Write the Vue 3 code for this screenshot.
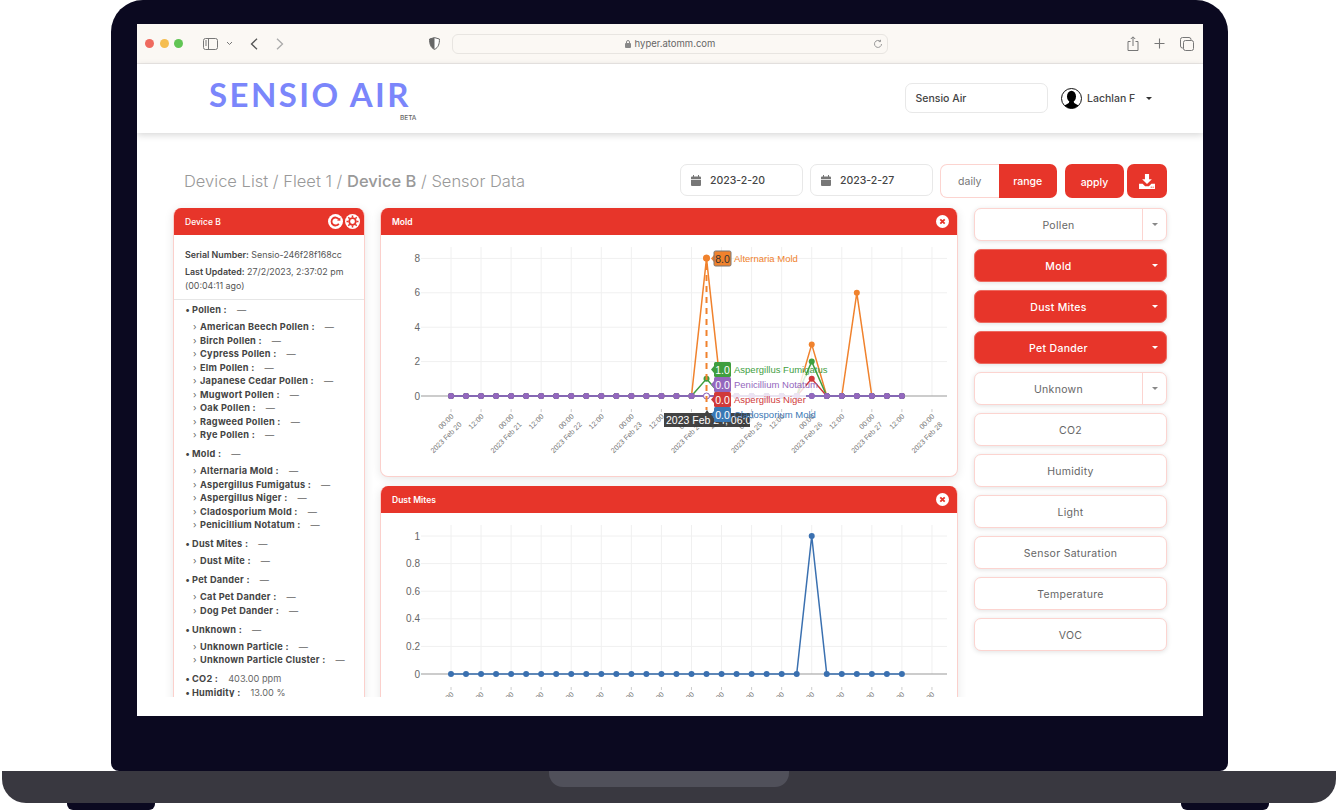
<template>
  <div class="page">
    <div class="laptop">
      <div class="screen">
        <!-- safari toolbar -->
        <div class="browser-bar">
          <div class="bar-left">
            <span class="dot red"></span>
            <span class="dot yellow"></span>
            <span class="dot green"></span>
            <svg class="ic sidebar-ic" width="15" height="12" viewBox="0 0 15 12" fill="none" stroke="#777" stroke-width="1">
              <rect x="0.5" y="0.5" width="14" height="11" rx="2" />
              <path d="M5.5 .5v11M2 3h2M2 5h2M2 7h2" />
            </svg>
            <svg class="ic chev-ic" width="7" height="5" viewBox="0 0 7 5" fill="none" stroke="#777" stroke-width="1"><path d="M1 1l2.5 2.5L6 1" /></svg>
            <svg class="ic back-ic" width="8" height="12" viewBox="0 0 8 12" fill="none" stroke="#555" stroke-width="1.3"><path d="M7 .8L1.5 6 7 11.2" /></svg>
            <svg class="ic fwd-ic" width="8" height="12" viewBox="0 0 8 12" fill="none" stroke="#aaa" stroke-width="1.3"><path d="M1 .8L6.5 6 1 11.2" /></svg>
          </div>
          <svg class="ic shield-ic" width="11" height="13" viewBox="0 0 11 13">
            <path d="M5.5.6L10.4 2c.2 4.600-1 8.600-4.900 10.400C1.600 10.600.4 6.600.6 2z" fill="#fff" stroke="#666" />
            <path d="M5.500.6L.6 2c-.2 4.600 1 8.600 4.900 10.400z" fill="#666" />
          </svg>
          <div class="url-bar">
            <svg width="6" height="8" viewBox="0 0 6 8"><rect y="3" width="6" height="5" rx="1" fill="#888" /><path d="M1.500 3V2a1.500 1.500 0 013 0v1" fill="none" stroke="#888" /></svg>
            <span>hyper.atomm.com</span>
            <svg class="reload" width="10" height="10" viewBox="0 0 10 10" fill="none" stroke="#999"><path d="M8.500 5a3.500 3.500 0 11-1.200-2.700M7.500.8v1.800H5.700" /></svg>
          </div>
          <div class="bar-right">
            <svg width="12" height="15" viewBox="0 0 12 15" fill="none" stroke="#777"><path d="M3.500 5.500H1v9h10v-9H8.500M6 10V1M3.800 3L6 .8 8.200 3" /></svg>
            <svg width="11" height="11" viewBox="0 0 11 11" fill="none" stroke="#777" stroke-width="1.100"><path d="M5.500.5v10M.5 5.500h10" /></svg>
            <svg width="14" height="14" viewBox="0 0 14 14" fill="none" stroke="#777"><rect x="3.500" y="3.500" width="10" height="10" rx="2" /><path d="M3.500 11H2.500a2 2 0 01-2-2V2.500a2 2 0 012-2H9a2 2 0 012 2v1" /></svg>
          </div>
        </div>

        <!-- app header -->
        <header class="app-header">
          <div class="logo">
            <span class="logo-name">SENSIO AIR</span>
            <span class="logo-beta">BETA</span>
          </div>
          <div class="org-select">Sensio Air</div>
          <svg class="avatar" width="21" height="21" viewBox="0 0 21 21">
            <defs><clipPath id="av"><circle cx="10.500" cy="10.500" r="10" /></clipPath></defs>
            <circle cx="10.500" cy="10.500" r="10" fill="#fff" stroke="#111" />
            <g clip-path="url(#av)">
              <ellipse cx="10.500" cy="8.500" rx="4.500" ry="5.800" />
              <path d="M8.500 13h4l.7 2 4.300 2.500V21h-14v-3.500L7.800 15z" />
            </g>
          </svg>
          <span class="user-name">Lachlan F</span>
          <span class="caret dark"></span>
        </header>

        <main class="content">
          <div class="toolbar">
            <div class="breadcrumb">
              <span>Device List</span> / <span>Fleet 1</span> / <b>Device B</b> / <span>Sensor Data</span>
            </div>
            <div class="controls">
              <div v-for="d in dates" :key="d" class="date-input">
                <svg width="10" height="11" viewBox="0 0 10 11" fill="#777">
                  <path d="M2 0h1v1.500h4V0h1v1.500h1a1 1 0 011 1V4H0V2.500a1 1 0 011-1h1zM0 4.700h10V10a1 1 0 01-1 1H1a1 1 0 01-1-1z" />
                </svg>
                <span>{{ d }}</span>
              </div>
              <div class="toggle">
                <span class="toggle-off">daily</span>
                <span class="toggle-on">range</span>
              </div>
              <button class="btn-red apply">apply</button>
              <button class="btn-red download">
                <svg width="16" height="15" viewBox="0 0 17 16" fill="#fff">
                  <path d="M6.300 0h4.400v5.500h3L8.500 10.700 3.300 5.500h3zM0 10.500h3.800L6.500 13h4l2.700-2.500H17V16H0z" />
                  <circle cx="13" cy="14" r=".6" fill="#e7352a" />
                  <circle cx="15" cy="14" r=".6" fill="#e7352a" />
                </svg>
              </button>
            </div>
          </div>

          <div class="columns">
            <section class="panel device-panel">
              <div class="panel-head">
                <span>Device B</span>
                <div class="head-icons">
                  <svg width="15" height="15" viewBox="0 0 15 15">
                    <circle cx="7.500" cy="7.500" r="7.500" fill="#fff" />
                    <path d="M10.800 5.200a4 4 0 100 4.600" fill="none" stroke="#e7352a" stroke-width="1.800" />
                    <path d="M9 6.600l3.400.2-.1-3.400z" fill="#e7352a" />
                  </svg>
                  <svg width="15" height="15" viewBox="0 0 15 15">
                    <circle cx="7.500" cy="7.500" r="7.500" fill="#fff" />
                    <circle cx="7.500" cy="7.500" r="3.300" fill="none" stroke="#e7352a" stroke-width="1.800" />
                    <path d="M7.500 1.500v2M7.500 11.500v2M1.500 7.500h2M11.500 7.500h2M3.300 3.300l1.400 1.400M10.300 10.300l1.400 1.400M11.700 3.300l-1.400 1.400M4.700 10.300l-1.400 1.400" stroke="#e7352a" stroke-width="1.500" />
                  </svg>
                </div>
              </div>
              <div class="device-info">
                <div class="info-row"><b>Serial Number:</b> Sensio-246f28f168cc</div>
                <div class="info-row"><b>Last Updated:</b> 27/2/2023, 2:37:02 pm</div>
                <div class="info-ago">(00:04:11 ago)</div>
              </div>
              <div class="reading-list">
                <div v-for="g in readings" :key="g.name" class="group">
                  <div class="group-title">
                    <span class="bullet">•</span><b>{{ g.name }} :</b><span class="val">{{ g.value }}</span>
                  </div>
                  <div v-if="g.items" class="sublist">
                    <div v-for="item in g.items" :key="item" class="sub-row">
                      <span class="arrow">›</span><b>{{ item }} :</b><span class="val">—</span>
                    </div>
                  </div>
                </div>
              </div>
            </section>

            <div class="charts">
              <section v-for="c in charts" :key="c.title" class="panel chart-panel">
                <div class="panel-head">
                  <span>{{ c.title }}</span>
                  <svg width="13" height="13" viewBox="0 0 13 13">
                    <circle cx="6.500" cy="6.500" r="6.500" fill="#fff" />
                    <path d="M4.300 4.300l4.400 4.400M8.700 4.300L4.300 8.700" stroke="#e7352a" stroke-width="1.800" />
                  </svg>
                </div>
                <svg class="chart" width="576" height="241" :viewBox="`381 ${c.top} 576 241`">
                  <line v-for="t in ticks" :key="'v' + t.i" :x1="t.x" :x2="t.x" :y1="c.gridTop" :y2="c.zero" stroke="#f0f0f0" />
                  <g v-for="y in c.yAxis" :key="'y' + y.label">
                    <line x1="421" x2="947" :y1="y.y" :y2="y.y" :stroke="y.value === 0 ? '#999' : '#f0f0f0'" />
                    <text class="y-label" x="420" :y="y.y + 3.500" text-anchor="end">{{ y.label }}</text>
                  </g>
                  <g v-for="t in ticks" :key="'t' + t.i">
                    <line :x1="t.x" :x2="t.x" :y1="c.zero + 13" :y2="c.zero + 16" stroke="#ccc" />
                    <text class="x-label" text-anchor="end" :x="t.x + 3" :y="c.zero + 21" :transform="`rotate(-45 ${t.x + 3} ${c.zero + 21})`">{{ t.time }}</text>
                    <text v-if="t.date" class="x-label" text-anchor="end" :x="t.x + 11" :y="c.zero + 29" :transform="`rotate(-45 ${t.x + 11} ${c.zero + 29})`">{{ t.date }}</text>
                  </g>
                  <g v-for="s in c.series" :key="s.name">
                    <polyline :points="s.points" fill="none" :stroke="s.color" stroke-width="1.500" />
                    <circle v-for="p in s.dots" :key="p.x" :cx="p.x" :cy="p.y" r="3" :fill="s.color" />
                  </g>
                  <template v-if="c.tooltip">
                    <rect x="718" y="372" width="88" height="32" fill="#fff" opacity="0.82" />
                    <circle :cx="hoverX" :cy="c.zero" r="3" fill="#fff" stroke="#9467bd" />
                    <line :x1="hoverX" :x2="hoverX" y1="264" y2="410" stroke="#f0822d" stroke-width="2" stroke-dasharray="6 5" />
                    <circle :cx="hoverX" cy="258" r="3.500" fill="#f0822d" />
                    <path d="M702 413h3l2-3 2 3h41v14h-86v-14z" fill="#333" opacity="0.92" />
                    <text class="tip-date" x="666" y="424">2023 Feb 24, 06:00</text>
                    <g v-for="l in hoverLabels" :key="l.name">
                      <path :d="`M714 ${l.y + 4}l-3 3.500 3 3.500z`" :fill="l.color" />
                      <rect x="714" :y="l.y" width="17" height="15" rx="1.500" :fill="l.color" :stroke="l.border" />
                      <text class="tip-value" x="722.500" :y="l.y + 11.500" text-anchor="middle" :fill="l.ink">{{ l.value }}</text>
                      <text class="tip-name" x="734" :y="l.y + 11" :fill="l.color">{{ l.name }}</text>
                    </g>
                  </template>
                </svg>
              </section>
            </div>

            <div class="filters">
              <div v-for="f in filters" :key="f.name" class="filter" :class="{ active: f.active, split: f.split }">
                <span class="filter-name">{{ f.name }}</span>
                <span v-if="f.split" class="filter-drop"><span class="caret"></span></span>
              </div>
            </div>
          </div>
        </main>
        <div class="screen-foot"></div>
      </div>
    </div>
    <div class="base">
      <div class="notch"></div>
    </div>
    <div class="feet">
      <span class="foot"></span>
      <span class="foot"></span>
    </div>
  </div>
</template>

<script setup>
const dates = ["2023-2-20", "2023-2-27"];

const readings = [
  {
    name: "Pollen",
    value: "—",
    items: [
      "American Beech Pollen",
      "Birch Pollen",
      "Cypress Pollen",
      "Elm Pollen",
      "Japanese Cedar Pollen",
      "Mugwort Pollen",
      "Oak Pollen",
      "Ragweed Pollen",
      "Rye Pollen",
    ],
  },
  {
    name: "Mold",
    value: "—",
    items: [
      "Alternaria Mold",
      "Aspergillus Fumigatus",
      "Aspergillus Niger",
      "Cladosporium Mold",
      "Penicillium Notatum",
    ],
  },
  { name: "Dust Mites", value: "—", items: ["Dust Mite"] },
  { name: "Pet Dander", value: "—", items: ["Cat Pet Dander", "Dog Pet Dander"] },
  { name: "Unknown", value: "—", items: ["Unknown Particle", "Unknown Particle Cluster"] },
  { name: "CO2", value: "403.00 ppm" },
  { name: "Humidity", value: "13.00 %" },
];

const filters = [
  { name: "Pollen", split: true },
  { name: "Mold", split: true, active: true },
  { name: "Dust Mites", split: true, active: true },
  { name: "Pet Dander", split: true, active: true },
  { name: "Unknown", split: true },
  { name: "CO2" },
  { name: "Humidity" },
  { name: "Light" },
  { name: "Sensor Saturation" },
  { name: "Temperature" },
  { name: "VOC" },
];

const xOf = (i) => 451 + i * 15.03;
const hoverX = xOf(17);

const ticks = [];
for (let i = 0; i <= 16; i++) {
  const day = 20 + i / 2;
  ticks.push({
    i,
    x: xOf(i * 2),
    time: i % 2 ? "12:00" : "00:00",
    date: i % 2 ? "" : `2023 Feb ${day}`,
  });
}

// one value every 6h, zero unless listed
function makeSeries(name, color, peaks, yOf) {
  const dots = [];
  for (let i = 0; i <= 30; i++) {
    dots.push({ x: xOf(i), y: yOf(peaks[i] || 0) });
  }
  return { name, color, dots, points: dots.map((d) => `${d.x},${d.y}`).join(" ") };
}

const moldY = (v) => 396 - v * 17.2;
const dustY = (v) => 674 - v * 138;

const charts = [
  {
    title: "Mold",
    top: 235,
    gridTop: 247,
    zero: 396,
    tooltip: true,
    yAxis: [8, 6, 4, 2, 0].map((v) => ({ value: v, label: String(v), y: moldY(v) })),
    series: [
      makeSeries("Alternaria Mold", "#f0822d", { 17: 8, 24: 3, 27: 6 }, moldY),
      makeSeries("Aspergillus Fumigatus", "#3f9e3f", { 17: 1, 24: 2 }, moldY),
      makeSeries("Aspergillus Niger", "#d0393a", { 24: 1 }, moldY),
      makeSeries("Cladosporium Mold", "#3a78b5", {}, moldY),
      makeSeries("Penicillium Notatum", "#9467bd", {}, moldY),
    ],
  },
  {
    title: "Dust Mites",
    top: 513,
    gridTop: 525,
    zero: 674,
    yAxis: [1, 0.8, 0.6, 0.4, 0.2, 0].map((v) => ({ value: v, label: String(v), y: dustY(v) })),
    series: [makeSeries("Dust Mite", "#3a70b0", { 24: 1 }, dustY)],
  },
];

const hoverLabels = [
  { name: "Alternaria Mold", value: "8.0", y: 251, color: "#f0822d", ink: "#333", border: "#777" },
  { name: "Aspergillus Fumigatus", value: "1.0", y: 362, color: "#3f9e3f", ink: "#fff", border: "none" },
  { name: "Penicillium Notatum", value: "0.0", y: 377, color: "#9467bd", ink: "#fff", border: "none" },
  { name: "Aspergillus Niger", value: "0.0", y: 392, color: "#d0393a", ink: "#fff", border: "none" },
  { name: "Cladosporium Mold", value: "0.0", y: 407, color: "#3a78b5", ink: "#fff", border: "none" },
];
</script>

<style>
html,
body {
  margin: 0;
  background: #fff;
}
</style>

<style scoped>
.page {
  width: 1336px;
  height: 810px;
  overflow: hidden;
  background: #fff;
  font-family: Inter, "Liberation Sans", sans-serif;
  color: #444;
}

.laptop {
  box-sizing: border-box;
  width: 1117px;
  height: 771px;
  margin-left: 111px;
  padding: 24px 25px 55px 26px;
  background: #0b0920;
  border-radius: 32px 32px 8px 8px;
}

.screen {
  display: flex;
  flex-direction: column;
  height: 692px;
  background: #fff;
  overflow: hidden;
}

/* browser bar */
.browser-bar {
  display: flex;
  align-items: center;
  flex: none;
  height: 40px;
  background: #fbf8f4;
  border-bottom: 1px solid #ece9e6;
  box-sizing: border-box;
}

.bar-left {
  display: flex;
  align-items: center;
  width: 292px;
  padding-left: 8px;
  box-sizing: border-box;
}

.dot {
  width: 9px;
  height: 9px;
  border-radius: 50%;
  margin-right: 5.5px;
}

.dot.red {
  background: #ef6a5f;
}

.dot.yellow {
  background: #f5bd4f;
}

.dot.green {
  background: #61c554;
}

.sidebar-ic {
  margin-left: 14px;
}

.chev-ic {
  margin-left: 8px;
}

.back-ic {
  margin-left: 17px;
}

.fwd-ic {
  margin-left: 18px;
}

.url-bar {
  position: relative;
  display: flex;
  align-items: center;
  justify-content: center;
  gap: 4px;
  width: 436px;
  height: 20px;
  margin-left: 12px;
  box-sizing: border-box;
  background: #fbf8f4;
  border: 1px solid #e8e5e1;
  border-radius: 6px;
  font-size: 9.500px;
  color: #666;
}

.reload {
  position: absolute;
  right: 4px;
  top: 4px;
}

.bar-right {
  display: flex;
  align-items: center;
  gap: 15px;
  margin-left: auto;
  padding-right: 9px;
}

/* app header */
.app-header {
  display: flex;
  align-items: center;
  flex: none;
  height: 69px;
  padding-left: 72px;
  background: #fff;
  box-shadow: 0 2px 7px rgba(0, 0, 0, 0.16);
  position: relative;
}

.logo {
  display: flex;
  flex-direction: column;
  width: 696px;
  padding-top: 2px;
}

.logo-name {
  font-family: Lato, sans-serif;
  font-weight: 700;
  font-size: 33px;
  line-height: 33px;
  letter-spacing: 2.400px;
  color: #7b86fb;
}

.logo-beta {
  margin: 3px 0 0 191px;
  font-size: 6.500px;
  font-weight: 500;
  line-height: 8px;
  color: #666;
}

.org-select {
  box-sizing: border-box;
  width: 143px;
  height: 30px;
  margin-top: -2px;
  padding-left: 9.500px;
  line-height: 29px;
  font-size: 10.500px;
  font-weight: 500;
  color: #444;
  border: 1px solid #e8e8e8;
  border-radius: 7px;
}

.avatar {
  margin-left: 13px;
}

.user-name {
  margin-left: 5px;
  font-size: 10.500px;
  font-weight: 500;
  color: #444;
}

.caret {
  display: inline-block;
  width: 0;
  height: 0;
  border-left: 3px solid transparent;
  border-right: 3px solid transparent;
  border-top: 3px solid #888;
}

.caret.dark {
  margin-left: 11px;
  border-top-color: #333;
}

/* page body */
.content {
  flex: none;
  box-sizing: border-box;
  height: 564px;
  padding: 31px 36px 0;
  overflow: hidden;
}

.screen-foot {
  flex: 1;
  background: #fff;
  position: relative;
}

.toolbar {
  display: flex;
  align-items: flex-start;
  height: 34px;
  margin-bottom: 10px;
}

.breadcrumb {
  margin-left: 11px;
  font-size: 16.500px;
  line-height: 34px;
  font-weight: 300;
  color: #999;
}

.breadcrumb b {
  font-weight: 500;
}

.controls {
  display: flex;
  margin-left: auto;
}

.date-input {
  display: flex;
  align-items: center;
  gap: 9px;
  box-sizing: border-box;
  width: 123px;
  height: 32px;
  margin-right: 7px;
  padding-left: 10px;
  border: 1px solid #e8e8e8;
  border-radius: 7px;
  font-size: 10.500px;
  font-weight: 500;
  color: #444;
}

.toggle {
  display: flex;
  width: 117px;
  height: 34px;
  margin-right: 8px;
  font-size: 10.500px;
  line-height: 36px;
  text-align: center;
}

.toggle-off {
  box-sizing: border-box;
  flex: 58;
  color: #777;
  border: 1px solid #fcd4d0;
  border-right: 0;
  border-radius: 7px 0 0 7px;
  line-height: 34px;
}

.toggle-on {
  flex: 59;
  color: #fff;
  font-weight: 500;
  background: #e7352a;
  border-radius: 0 7px 7px 0;
}

.btn-red {
  height: 34px;
  padding: 2px 0 0;
  border: 0;
  border-radius: 7px;
  background: #e7352a;
  color: #fff;
  font-family: inherit;
  font-size: 10.500px;
  font-weight: 500;
}

.apply {
  width: 59px;
  margin-right: 3px;
}

.download {
  display: flex;
  align-items: center;
  justify-content: center;
  width: 40px;
  padding: 0;
}

.columns {
  display: flex;
  align-items: flex-start;
  gap: 15px;
}

.panel {
  box-sizing: border-box;
  background: #fff;
  border: 1px solid #fbd0cc;
  border-top: 0;
  border-radius: 8px;
  box-shadow: 0 2px 10px rgba(0, 0, 0, 0.1);
  overflow: hidden;
}

.panel-head {
  display: flex;
  align-items: center;
  justify-content: space-between;
  height: 27px;
  margin: 0 -1px;
  padding: 0 9px 0 12px;
  background: #e7352a;
  color: #fff;
  font-size: 8.500px;
  font-weight: 500;
}

.head-icons {
  display: flex;
  gap: 2px;
  margin-right: -4px;
}

/* device panel */
.device-panel {
  flex: none;
  width: 192px;
  height: 600px;
}

.device-info {
  padding: 11px 10px 6px 11px;
  border-bottom: 1px solid #e6e6e6;
  font-size: 8.870px;
  color: #555;
}

.info-row {
  line-height: 17px;
}

.info-row b {
  color: #444;
  font-weight: 600;
}

.info-ago {
  margin-top: -1.500px;
  line-height: 14px;
}

.reading-list {
  padding: 3.500px 0 0 11px;
  font-size: 9.200px;
  color: #444;
}

.group-title {
  display: flex;
  line-height: 14px;
}

.group-title b,
.sub-row b {
  font-weight: 700;
  letter-spacing: 0.250px;
}

.bullet {
  width: 7px;
  flex: none;
}

.val {
  margin-left: 10px;
  font-weight: 400;
  color: #666;
}

.sublist {
  margin: 3.250px 0 5.250px 8px;
}

.sub-row {
  display: flex;
  line-height: 13.500px;
}

.arrow {
  width: 7px;
  flex: none;
  color: #666;
}

/* charts */
.charts {
  display: flex;
  flex-direction: column;
  gap: 9px;
  flex: none;
  width: 578px;
}

.chart-panel {
  height: 269px;
}

.chart-panel .panel-head {
  font-weight: 600;
}

.chart {
  display: block;
  font-family: "Liberation Sans", Arial, sans-serif;
}

.y-label {
  font-size: 10px;
  fill: #666;
}

.x-label {
  font-size: 7.200px;
  fill: #777;
}

.tip-date {
  font-size: 10.500px;
  fill: #fff;
}

.tip-value {
  font-size: 10.500px;
}

.tip-name {
  font-size: 9.500px;
}

/* right filter buttons */
.filters {
  display: flex;
  flex-direction: column;
  gap: 8px;
  flex: none;
  width: 193px;
  margin-left: 1px;
}

.filter {
  display: flex;
  align-items: center;
  box-sizing: border-box;
  height: 33px;
  background: #fff;
  border: 1px solid #fcd4d0;
  border-radius: 7px;
  box-shadow: 0 1px 5px rgba(0, 0, 0, 0.12);
  font-size: 10.500px;
  font-weight: 400;
  letter-spacing: 0.300px;
  color: #666;
}

.filter-name {
  flex: 1;
  padding-top: 2px;
  text-align: center;
}

.filter-drop {
  display: flex;
  align-items: center;
  justify-content: center;
  width: 24px;
  height: 100%;
  border-left: 1px solid #fcd4d0;
  box-sizing: border-box;
}

.filter.active {
  background: #e7352a;
  border-color: #ee6a60;
  color: #fff;
  font-weight: 500;
}

.filter.active .filter-drop {
  border-left-color: transparent;
}

.filter.active .caret {
  border-top-color: #fff;
}

/* laptop base */
.base {
  display: flex;
  justify-content: center;
  width: 1334px;
  height: 32px;
  margin-left: 2px;
  background: #393840;
  border-radius: 0 0 24px 24px;
}

.notch {
  width: 240px;
  height: 16px;
  background: #50505a;
  border-radius: 0 0 14px 14px;
}

.feet {
  display: flex;
  justify-content: space-between;
  padding: 0 67px;
}

.foot {
  width: 88px;
  height: 7px;
  background: #0b0920;
  border-radius: 0 0 6px 6px;
}
</style>
